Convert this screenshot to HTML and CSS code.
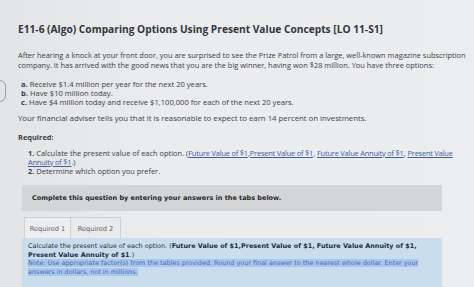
FILE: index.html
```html
<!DOCTYPE html>
<html>
<head>
<meta charset="utf-8">
<link rel="stylesheet" href="styles.css">
</head>
<body>
<div class="edge"></div>
<div class="page">
  <h1 class="title">E11-6 (Algo) Comparing Options Using Present Value Concepts [LO 11-S1]</h1>
  <p class="para">After hearing a knock at your front door, you are surprised to see the Prize Patrol from a large, well-known magazine subscription company. It has arrived with the good news that you are the big winner, having won $28 million. You have three options:</p>
  <ul class="opts">
    <li><b>a.</b> Receive $1.4 million per year for the next 20 years.</li>
    <li><b>b.</b> Have $10 million today.</li>
    <li><b>c.</b> Have $4 million today and receive $1,100,000 for each of the next 20 years.</li>
  </ul>
  <p class="para2">Your financial adviser tells you that it is reasonable to expect to earn 14 percent on investments.</p>
  <p class="req">Required:</p>
  <ol class="steps">
    <li><b>1.</b> Calculate the present value of each option. (<a>Future Value of $1</a>,<a>Present Value of $1</a>, <a>Future Value Annuity of $1</a>, <a>Present Value Annuity of $1</a>.)</li>
    <li><b>2.</b> Determine which option you prefer.</li>
  </ol>
  <div class="complete">Complete this question by entering your answers in the tabs below.</div>
  <div class="tabs">
    <div class="tab active">Required 1</div>
    <div class="tab">Required 2</div>
  </div>
  <div class="panel">
    <div class="pline">Calculate the present value of each option. (<b>Future Value of $1,Present Value of $1, Future Value Annuity of $1, Present Value Annuity of $1</b>.)</div>
    <div class="note"><span class="sel">Note: Use appropriate factor(s) from the tables provided. Round your final answer to the nearest whole dollar. Enter your answers in dollars, not in millions.</span></div>
  </div>
</div>
</body>
</html>
```
FILE: styles.css
```css
html, body {
  margin: 0;
  padding: 0;
}
body {
  width: 474px;
  height: 287px;
  overflow: hidden;
  background: linear-gradient(90deg, #e2e4e6 0%, #eaecee 35%, #ebedef 100%);
  font-family: "Open Sans", "Liberation Sans", sans-serif;
  color: #3b3f47;
  position: relative;
}
.edge {
  position: absolute;
  left: -8px;
  top: 80px;
  width: 12px;
  height: 20px;
  border: 1px solid #9ea3a8;
  border-radius: 6px;
}
.page {
  padding: 22px 0 0 18px;
}
.title {
  margin: 0;
  font-size: 10.2px;
  line-height: 14px;
  font-weight: 700;
  color: #33363c;
}
.para {
  margin: 14px 0 0 0;
  font-size: 7.45px;
  line-height: 10px;
  width: 456px;
}
.opts {
  list-style: none;
  margin: 9.5px 0 0 3px;
  padding: 0;
  font-size: 7.6px;
  line-height: 9px;
}
.opts b { font-weight: 700; }
.para2 {
  margin: 6px 0 0 0;
  font-size: 7.8px;
  line-height: 10px;
}
.req {
  margin: 9.5px 0 0 0;
  font-size: 7.4px;
  line-height: 10px;
  font-weight: 700;
}
.steps {
  list-style: none;
  margin: 6.5px 0 0 10px;
  padding: 0;
  font-size: 7.45px;
  line-height: 9px;
  width: 436px;
}
.steps a {
  color: #3f5f9c;
  text-decoration: underline;
  letter-spacing: -0.2px;
}
.complete {
  margin: 9.5px 0 0 4px;
  width: 420px;
  height: 26px;
  padding-left: 10px;
  box-sizing: border-box;
  background: #d3d5d7;
  font-family: "DejaVu Sans", Verdana, sans-serif;
  font-weight: 700;
  font-size: 6.5px;
  line-height: 26px;
  color: #26292e;
}
.tabs {
  display: flex;
  margin: 6px 0 0 6px;
}
.tab {
  width: 47px;
  height: 21px;
  box-sizing: border-box;
  font-family: "DejaVu Sans", Verdana, sans-serif;
  font-size: 6.6px;
  line-height: 22px;
  text-align: center;
  color: #5a5e66;
  border: 1px solid #cdd1d4;
  border-bottom: none;
  background: #e8eaec;
}
.tab + .tab {
  width: 50px;
  border-left: none;
}
.tab.active {
  background: #eceef0;
}
.panel {
  margin: 0 0 0 4px;
  width: 420px;
  height: 60px;
  background: #c9dded;
  padding: 4px 0 0 6px;
  box-sizing: border-box;
  font-family: "DejaVu Sans", Verdana, sans-serif;
  font-size: 6.45px;
  line-height: 8.5px;
  color: #2b3140;
}
.pline {
  width: 404px;
}
.pline b { font-weight: 700; color: #1f2c4a; }
.note {
  color: #4a6db5;
  width: 404px;
}
.sel {
  background: #a9c6ec;
}
```
